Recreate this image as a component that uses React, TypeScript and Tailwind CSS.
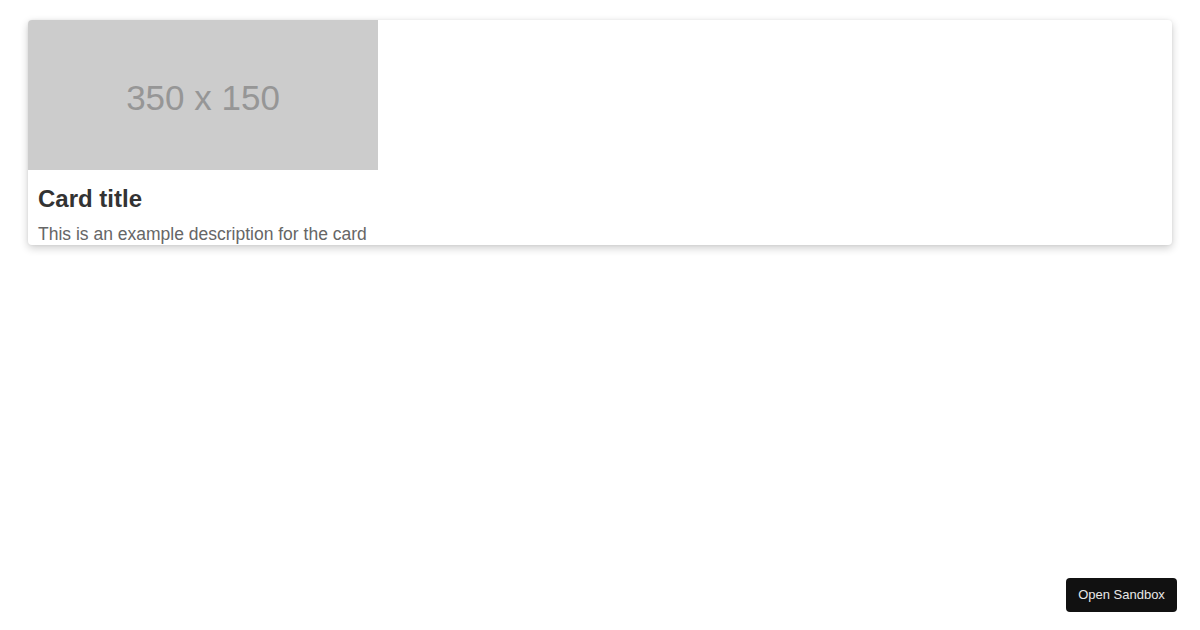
import React from "react";

export default function App() {
  return (
    <div className="relative w-[1200px] h-[630px] bg-white" style={{ fontFamily: '"Liberation Sans", Arial, sans-serif' }}>
      <div className="pt-5 px-7">
        <div className="h-[225px] overflow-hidden rounded bg-white shadow-[0_3px_8px_rgba(0,0,0,0.2),0_0_3px_rgba(0,0,0,0.06)]">
          <div className="w-[350px] h-[150px] bg-[#cccccc] flex items-center justify-center text-[#969696] text-[35px]">
            <span className="mt-[6px]">350 x 150</span>
          </div>
          <div className="px-[10px]">
            <h2 className="mt-[15px] text-[24px] font-bold leading-[28px] text-[#333333]">Card title</h2>
            <p className="mt-[9px] text-[17.5px] leading-[24px] text-[#666666]">This is an example description for the card</p>
          </div>
        </div>
      </div>
      <button className="absolute left-[1066px] top-[578px] w-[111px] h-[34px] rounded bg-[#111111] text-[13px] text-[#e8e8e8]" style={{ fontFamily: '"Liberation Sans", Arial, sans-serif' }}>
        Open Sandbox
      </button>
    </div>
  );
}
